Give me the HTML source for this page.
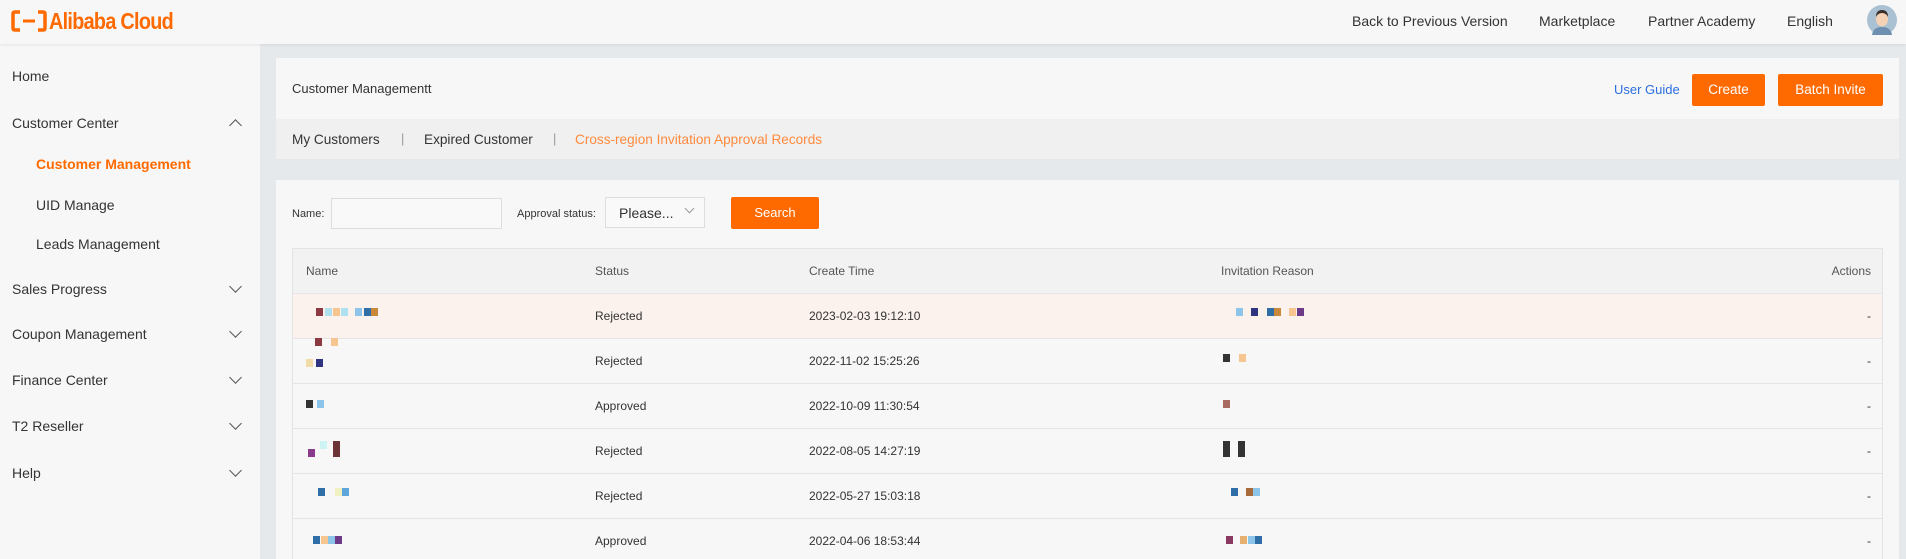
<!DOCTYPE html>
<html style="width:1906px;height:559px;overflow:hidden"><head><meta charset="utf-8"><style>
*{margin:0;padding:0;box-sizing:border-box}
body{width:1906px;height:559px;overflow:hidden;background:#e6e9ec;font-family:"Liberation Sans",Arial,sans-serif;color:#333;position:relative}
.abs{position:absolute;white-space:nowrap}
.hdr{position:absolute;left:0;top:0;width:1906px;height:44px;background:#f7f7f7;box-shadow:0 1px 3px rgba(0,0,0,.08);z-index:2}
.side{position:absolute;left:0;top:44px;width:260px;height:515px;background:#f7f7f7}
.nav{font-size:14px;color:#333}
.chev{position:absolute;left:231px;width:9px;height:9px;border-right:1.3px solid #555;border-bottom:1.3px solid #555;transform:rotate(45deg)}
.card{position:absolute;background:#f7f7f7}
.btn{position:absolute;background:#ff6a00;color:#fff;font-size:13.5px;text-align:center;border-radius:2px}
.tbl{position:absolute;left:292px;top:248px;width:1591px;border:1px solid #e3e3e3;border-bottom:none}
.row{height:45px;border-bottom:1px solid #e5e5e5;position:relative;font-size:12px;color:#333}
.row span{position:absolute;top:15px}
.px{position:absolute;width:7px;height:8px}
</style></head><body>
<div class="hdr">
 <svg class="abs" style="left:11px;top:10px" width="36" height="22" viewBox="0 0 36 22"><path d="M9 2H4Q2 2 2 4V18Q2 20 4 20H9M27 2H32Q34 2 34 4V18Q34 20 32 20H27" fill="none" stroke="#ff6a00" stroke-width="3.5"/><rect x="12" y="9.5" width="12" height="3" fill="#ff6a00"/></svg>
 <div class="abs" style="left:49px;top:8px;font-size:23px;color:#ff6a00;font-weight:bold;letter-spacing:-0.8px;transform:scaleX(0.86);transform-origin:0 0">Alibaba Cloud</div>
 <div class="abs" style="left:1352px;top:13px;font-size:14px;color:#333">Back to Previous Version</div>
 <div class="abs" style="left:1539px;top:13px;font-size:14px;color:#333">Marketplace</div>
 <div class="abs" style="left:1648px;top:13px;font-size:14px;color:#333">Partner Academy</div>
 <div class="abs" style="left:1787px;top:13px;font-size:14px;color:#333">English</div>
 <svg class="abs" style="left:1867px;top:5px" width="30" height="30" viewBox="0 0 30 30"><circle cx="15" cy="15" r="15" fill="#a9c1d2"/><path d="M5 30Q6 22 15 22Q24 22 25 30Z" fill="#6e8fb0"/><ellipse cx="15" cy="14" rx="6" ry="7.5" fill="#f4d2b5"/><path d="M9 12Q9 5 15 5Q21 5 21 12Q19 8 15 8Q11 8 9 12Z" fill="#3a2e2a"/></svg>
</div>
<div class="side">
 <div class="abs nav" style="left:12px;top:24px">Home</div>
 <div class="abs nav" style="left:12px;top:71px">Customer Center</div>
 <div class="chev" style="top:77px;transform:rotate(-135deg)"></div>
 <div class="abs nav" style="left:36px;top:112px;color:#ff6a00;font-weight:bold">Customer Management</div>
 <div class="abs nav" style="left:36px;top:153px">UID Manage</div>
 <div class="abs nav" style="left:36px;top:192px">Leads Management</div>
 <div class="abs nav" style="left:12px;top:237px">Sales Progress</div><div class="chev" style="top:238px"></div>
 <div class="abs nav" style="left:12px;top:282px">Coupon Management</div><div class="chev" style="top:283px"></div>
 <div class="abs nav" style="left:12px;top:328px">Finance Center</div><div class="chev" style="top:329px"></div>
 <div class="abs nav" style="left:12px;top:374px">T2 Reseller</div><div class="chev" style="top:375px"></div>
 <div class="abs nav" style="left:12px;top:421px">Help</div><div class="chev" style="top:422px"></div>
</div>
<div class="card" style="left:276px;top:58px;width:1623px;height:101px">
 <div style="position:absolute;left:0;top:61px;width:100%;height:40px;background:#f0f0f0"></div>
</div>
<div class="abs" style="left:292px;top:81px;font-size:13px;color:#333">Customer Managementt</div>
<div class="abs" style="left:1614px;top:82px;font-size:13px;color:#2b6de0">User Guide</div>
<div class="btn" style="left:1692px;top:74px;width:73px;height:32px;line-height:32px">Create</div>
<div class="btn" style="left:1778px;top:74px;width:105px;height:32px;line-height:32px">Batch Invite</div>
<div class="abs" style="left:292px;top:132px;font-size:13.6px;color:#333">My Customers</div>
<div class="abs" style="left:401px;top:131px;font-size:13px;color:#999">|</div>
<div class="abs" style="left:424px;top:132px;font-size:13.6px;color:#333">Expired Customer</div>
<div class="abs" style="left:553px;top:131px;font-size:13px;color:#999">|</div>
<div class="abs" style="left:575px;top:132px;font-size:13.6px;color:#ff8a3d">Cross-region Invitation Approval Records</div>
<div class="card" style="left:276px;top:180px;width:1623px;height:379px"></div>
<div class="abs" style="left:292px;top:208px;font-size:11px;color:#333">Name:</div>
<div class="abs" style="left:331px;top:198px;width:171px;height:31px;border:1px solid #ddd;background:#f9f9f9"></div>
<div class="abs" style="left:517px;top:208px;font-size:11px;color:#333">Approval status:</div>
<div class="abs" style="left:605px;top:197px;width:100px;height:31px;border:1px solid #ddd;background:#f9f9f9;font-size:14px;color:#333;padding:7px 0 0 13px">Please...</div>
<div class="abs" style="left:686px;top:205px;width:7px;height:7px;border-right:1px solid #999;border-bottom:1px solid #999;transform:rotate(45deg)"></div>
<div class="btn" style="left:731px;top:197px;width:88px;height:32px;line-height:32px;font-size:13px">Search</div>
<div style="position:absolute;left:0;top:0;width:1906px;height:559px;overflow:hidden">
<div class="tbl">
 <div class="row" style="background:#f2f2f2;color:#555"><span style="left:13px">Name</span><span style="left:302px">Status</span><span style="left:516px">Create Time</span><span style="left:928px">Invitation Reason</span><span style="right:11px">Actions</span></div>
 <div class="row" style="background:#fcf2ed"><span style="left:302px">Rejected</span><span style="left:516px">2023-02-03 19:12:10</span><span style="right:11px">-</span>
  <i class="px" style="left:23px;top:14px;background:#8a3a40"></i><i class="px" style="left:32px;top:14px;background:#b0e0f0"></i><i class="px" style="left:40px;top:14px;background:#f6c590"></i><i class="px" style="left:48px;top:14px;background:#b0e0f0"></i><i class="px" style="left:62px;top:14px;background:#8cc4ea"></i><i class="px" style="left:71px;top:14px;background:#2f6ea6"></i><i class="px" style="left:78px;top:14px;background:#c9883a"></i>
  <i class="px" style="left:943px;top:14px;background:#8cc4ea"></i><i class="px" style="left:958px;top:14px;background:#2f3580"></i><i class="px" style="left:974px;top:14px;background:#2f6ea6"></i><i class="px" style="left:981px;top:14px;background:#c9883a"></i><i class="px" style="left:996px;top:14px;background:#f6c590"></i><i class="px" style="left:1004px;top:14px;background:#6b3b8a"></i></div>
 <div class="row"><span style="left:302px">Rejected</span><span style="left:516px">2022-11-02 15:25:26</span><span style="right:11px">-</span>
  <i class="px" style="left:22px;top:-1px;background:#8a3a40"></i><i class="px" style="left:38px;top:-1px;background:#f6c590"></i><i class="px" style="left:13px;top:20px;background:#f1dca8"></i><i class="px" style="left:23px;top:20px;background:#2f3580"></i>
  <i class="px" style="left:930px;top:15px;background:#333"></i><i class="px" style="left:946px;top:15px;background:#f6c590"></i></div>
 <div class="row"><span style="left:302px">Approved</span><span style="left:516px">2022-10-09 11:30:54</span><span style="right:11px">-</span>
  <i class="px" style="left:13px;top:16px;background:#333"></i><i class="px" style="left:24px;top:16px;background:#8cc4ea"></i>
  <i class="px" style="left:930px;top:16px;background:#a86a60"></i></div>
 <div class="row"><span style="left:302px">Rejected</span><span style="left:516px">2022-08-05 14:27:19</span><span style="right:11px">-</span>
  <i class="px" style="left:15px;top:20px;background:#8a3a8a"></i><i class="px" style="left:27px;top:12px;background:#cdf3f3"></i><i class="px" style="left:40px;top:12px;height:16px;background:#6b3538"></i>
  <i class="px" style="left:930px;top:12px;height:16px;background:#333"></i><i class="px" style="left:945px;top:12px;height:16px;background:#333"></i></div>
 <div class="row"><span style="left:302px">Rejected</span><span style="left:516px">2022-05-27 15:03:18</span><span style="right:11px">-</span>
  <i class="px" style="left:25px;top:14px;background:#2f6ea6"></i><i class="px" style="left:42px;top:14px;background:#f1f0c0"></i><i class="px" style="left:49px;top:14px;background:#5ea5dc"></i>
  <i class="px" style="left:938px;top:14px;background:#2f6ea6"></i><i class="px" style="left:953px;top:14px;background:#a86a3a"></i><i class="px" style="left:960px;top:14px;background:#8cc4ea"></i></div>
 <div class="row"><span style="left:302px">Approved</span><span style="left:516px">2022-04-06 18:53:44</span><span style="right:11px">-</span>
  <i class="px" style="left:20px;top:17px;background:#2f6ea6"></i><i class="px" style="left:28px;top:17px;background:#f6c590"></i><i class="px" style="left:35px;top:17px;background:#8cc4ea"></i><i class="px" style="left:42px;top:17px;background:#6b3b8a"></i>
  <i class="px" style="left:933px;top:17px;background:#8a3a60"></i><i class="px" style="left:947px;top:17px;background:#e6b070"></i><i class="px" style="left:955px;top:17px;background:#8cc4ea"></i><i class="px" style="left:962px;top:17px;background:#2f6ea6"></i></div>
</div>
</div>
</body></html>
